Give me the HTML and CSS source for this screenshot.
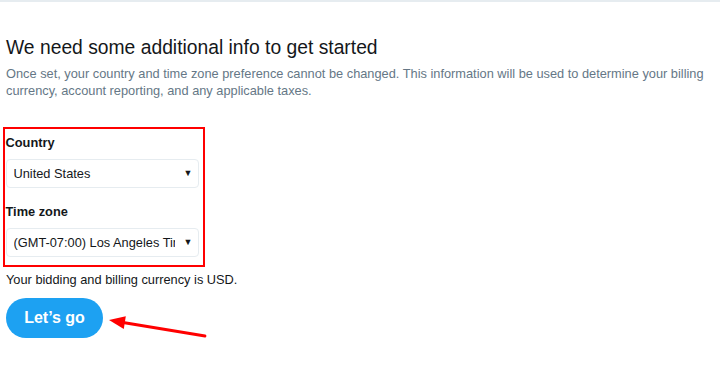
FILE: index.html
```html
<!DOCTYPE html>
<html>
<head>
<meta charset="utf-8">
<link rel="stylesheet" href="styles.css">
</head>
<body>
<div class="page">
  <h1 class="title">We need some additional info to get started</h1>
  <p class="intro">Once set, your country and time zone preference cannot be changed. This information will be used to determine your billing currency, account reporting, and any applicable taxes.</p>
  <div class="highlight">
    <div class="field">
      <div class="label">Country</div>
      <div class="select"><span class="value">United States</span><span class="caret">▼</span></div>
    </div>
    <div class="field">
      <div class="label">Time zone</div>
      <div class="select"><span class="value">(GMT-07:00) Los Angeles Time</span><span class="caret">▼</span></div>
    </div>
  </div>
  <p class="note">Your bidding and billing currency is USD.</p>
  <button class="btn">Let’s go</button>
  <svg class="arrow" viewBox="0 0 110 30">
    <line x1="101" y1="21" x2="16" y2="7" stroke="#f00" stroke-width="2.8" stroke-linecap="round"/>
    <polygon points="5,5 21.8,1.2 19.8,14" fill="#f00"/>
  </svg>
</div>
</body>
</html>
```

FILE: styles.css
```css
html, body {
  margin: 0;
  padding: 0;
  background: #fff;
}
body {
  font-family: "Liberation Sans", Arial, sans-serif;
  color: #14171a;
  border-top: 2px solid #e6ecf0;
}
.page {
  position: relative;
  width: 712px;
  padding: 33px 0 0 6px;
}
.title {
  margin: 0;
  font-size: 19.3px;
  font-weight: normal;
  line-height: 25px;
  color: #14171a;
}
.intro {
  margin: 5px 0 0 0;
  font-size: 12.8px;
  line-height: 17px;
  color: #657786;
}
.highlight {
  box-sizing: border-box;
  margin: 28px 0 0 -3px;
  width: 202px;
  border: 2.5px solid #f00;
  padding: 2.5px 4.5px 8px 0.5px;
}
.field {
  margin-bottom: 13px;
}
.field:last-child {
  margin-bottom: 0;
}
.label {
  font-size: 12.8px;
  font-weight: bold;
  line-height: 18px;
  padding: 2px 0 7px 0;
}
.select {
  box-sizing: border-box;
  display: flex;
  align-items: center;
  height: 29px;
  border: 1px solid #e6ecf0;
  border-radius: 4px;
  padding: 0 5px 0 7px;
  font-size: 12.8px;
  color: #14171a;
}
.value {
  flex: 1;
  min-width: 0;
  white-space: nowrap;
  overflow: hidden;
  margin-right: 9px;
}
.caret {
  flex: none;
  font-size: 9px;
  color: #14171a;
}
.note {
  margin: 4.5px 0 0 0;
  font-size: 12.8px;
  line-height: 17px;
}
.btn {
  display: block;
  margin-top: 9.5px;
  width: 97px;
  height: 40px;
  border: none;
  border-radius: 20px;
  background: #1da1f2;
  color: #fff;
  font-family: "Liberation Sans", Arial, sans-serif;
  font-size: 16px;
  font-weight: bold;
  padding: 0;
}
.arrow {
  position: absolute;
  left: 104px;
  top: 313px;
  width: 110px;
  height: 30px;
}
```
